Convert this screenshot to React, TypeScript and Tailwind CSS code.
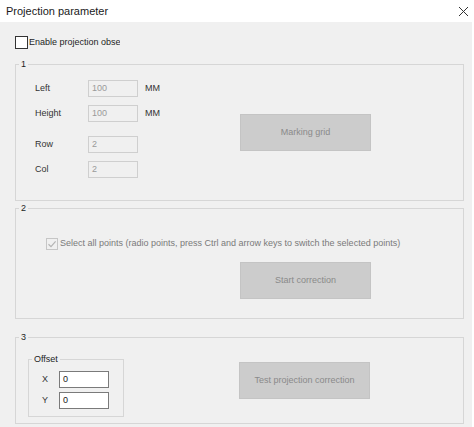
const font = { fontFamily: '"Liberation Sans", Arial, sans-serif' };

function Legend({ text }: { text: string }) {
  return (
    <span className="-mt-[8px] ml-[3px] block h-[14px] w-fit bg-[#f0f0f0] px-[2px] text-[9px] leading-[14px] text-[#1e1e1e]">
      {text}
    </span>
  );
}

function DisabledField({ value }: { value: string }) {
  return (
    <div className="flex h-[17px] w-[50px] items-center border border-[#cfcfcf] bg-[#f0f0f0] pl-[3px] text-[9px] text-[#9a9a9a]">
      {value}
    </div>
  );
}

function GreyButton({ label, className = "" }: { label: string; className?: string }) {
  return (
    <div
      className={`flex h-[37px] w-[131px] items-center justify-center border border-[#c4c4c4] bg-[#cccccc] text-[9px] text-[#8a8a8a] ${className}`}
    >
      {label}
    </div>
  );
}

function SizeRow({ label, value, unit, className = "" }: { label: string; value: string; unit?: string; className?: string }) {
  return (
    <div className={`flex h-[17px] items-center ${className}`}>
      <span className="w-[53px] text-[9px] text-[#333333]">{label}</span>
      <DisabledField value={value} />
      {unit && <span className="ml-[7px] text-[9px] text-[#333333]">{unit}</span>}
    </div>
  );
}

function OffsetRow({ axis, className = "" }: { axis: string; className?: string }) {
  return (
    <div className={`flex h-[17px] items-center pl-[13px] ${className}`}>
      <span className="w-[17px] text-[9px] text-[#333333]">{axis}</span>
      <div className="flex h-[17px] w-[50px] items-center border border-[#7a7a7a] bg-white pl-[3px] text-[9px] text-[#1a1a1a]">0</div>
    </div>
  );
}

export default function App() {
  return (
    <div className="h-[427px] w-[474px] bg-white" style={font}>
      {/* title bar */}
      <div className="flex h-[22px] items-center justify-between bg-white pl-[6px] pr-[4px]">
        <span className="text-[11px] text-[#1a1a1a]">Projection parameter</span>
        <svg width="11" height="11" viewBox="0 0 11 11" className="mr-[1px]">
          <path d="M1 1 L10 10 M10 1 L1 10" stroke="#333333" strokeWidth="1" />
        </svg>
      </div>

      <div className="h-[405px] w-[472px] bg-[#f0f0f0] pl-[15px] pt-[14px]">
        {/* enable checkbox */}
        <div className="flex h-[13px] w-[105px] items-center overflow-hidden whitespace-nowrap">
          <div className="h-[13px] w-[13px] shrink-0 border border-[#333333] bg-white" />
          <span className="ml-px text-[9px] text-[#1e1e1e]">Enable projection observation</span>
        </div>

        {/* group 1 */}
        <div className="mt-[15px] flex h-[137px] w-[449px] flex-col border border-[#d6d6d6]">
          <Legend text="1" />
          <div className="flex">
            <div className="w-[224px] pl-[19px]">
              <SizeRow label="Left" value="100" unit="MM" className="mt-[9px]" />
              <SizeRow label="Height" value="100" unit="MM" className="mt-[8px]" />
              <SizeRow label="Row" value="2" className="mt-[14px]" />
              <SizeRow label="Col" value="2" className="mt-[8px]" />
            </div>
            <GreyButton label="Marking grid" className="mt-[43px]" />
          </div>
        </div>

        {/* group 2 */}
        <div className="mt-[7px] flex h-[111px] w-[449px] flex-col border border-[#d6d6d6]">
          <Legend text="2" />
          <div className="mt-[22px] flex h-[13px] items-center pl-[30px]">
            <div className="flex h-[12px] w-[12px] items-center justify-center border border-[#c6c6c6] bg-[#f0f0f0]">
              <svg width="10" height="10" viewBox="0 0 10 10" fill="none">
                <path d="M1.5 5.2 L4 7.6 L8.6 2.4" stroke="#b4b4b4" strokeWidth="1.2" />
              </svg>
            </div>
            <span className="ml-[2px] whitespace-nowrap text-[9px] text-[#7a7a7a]">
              Select all points (radio points, press Ctrl and arrow keys to switch the selected points)
            </span>
          </div>
          <GreyButton label="Start correction" className="ml-[224px] mt-[12px]" />
        </div>

        {/* group 3 */}
        <div className="mt-[18px] flex h-[87px] w-[449px] flex-col border border-[#d6d6d6]">
          <Legend text="3" />
          <div className="flex">
            <div className="ml-[12px] mt-[15px] flex h-[58px] w-[96px] flex-col border border-[#d6d6d6]">
              <Legend text="Offset" />
              <OffsetRow axis="X" className="mt-[5px]" />
              <OffsetRow axis="Y" className="mt-[4px]" />
            </div>
            <GreyButton label="Test projection correction" className="ml-[115px] mt-[18px]" />
          </div>
        </div>
      </div>
    </div>
  );
}
